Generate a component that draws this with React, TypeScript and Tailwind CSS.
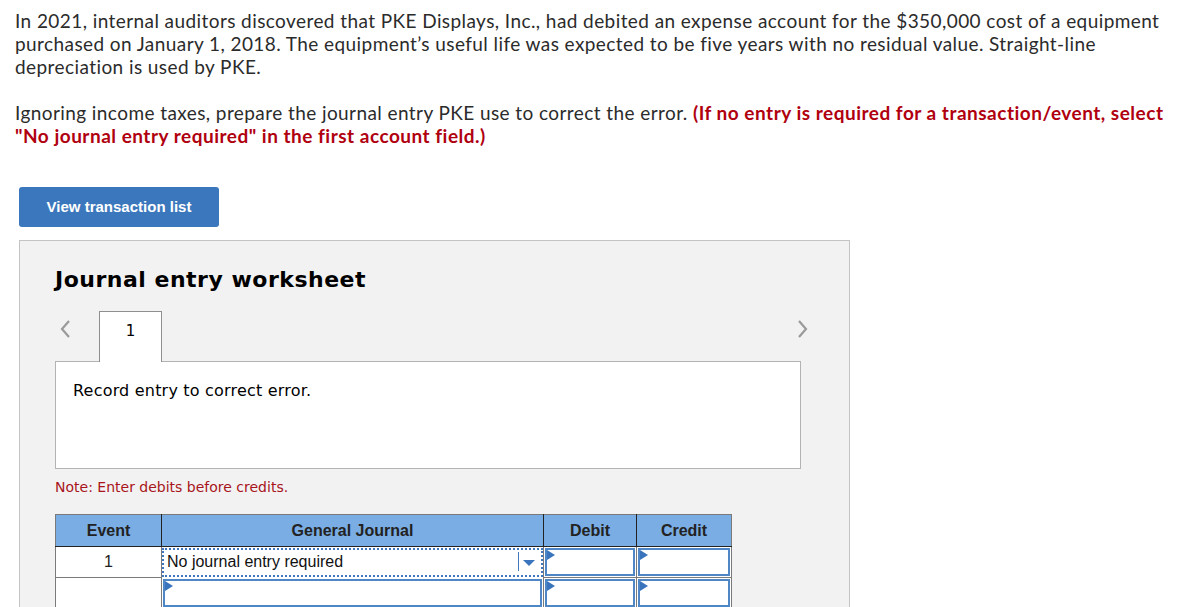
import React from 'react';

const Marker = () => (
  <span className="absolute left-0 top-0 w-0 h-0 border-y-[5px] border-y-transparent border-l-[8px] border-l-[#3a74bd]" />
);

const InputCell: React.FC = () => (
  <div className="relative h-[28px] border-2 border-[#4f86c6] bg-white">
    <Marker />
  </div>
);

const Chevron: React.FC<{ dir: 'left' | 'right' }> = ({ dir }) => (
  <svg width="12" height="18" viewBox="0 0 12 18" className="block">
    <path
      d={dir === 'left' ? 'M10 1 L3 9 L10 17' : 'M2 1 L9 9 L2 17'}
      fill="none"
      stroke="#9a9a9a"
      strokeWidth="2.2"
    />
  </svg>
);

export default function App() {
  return (
    <div className="bg-white w-[1195px] h-[607px] overflow-hidden text-[#2b2b2b]">
      <div className="px-[15px] pt-[9px] font-['Lato',sans-serif] text-[19px] leading-[23px] tracking-[0.42px]">
        <p className="whitespace-nowrap">
          In 2021, internal auditors discovered that PKE Displays, Inc., had debited an expense account for the $350,000 cost of a equipment
          <br />
          purchased on January 1, 2018. The equipment’s useful life was expected to be five years with no residual value. Straight-line
          <br />
          depreciation is used by PKE.
        </p>
        <p className="mt-[23px] whitespace-nowrap">
          Ignoring income taxes, prepare the journal entry PKE use to correct the error.{' '}
          <span className="font-bold text-[#b0000f] tracking-[0.5px]">
            (If no entry is required for a transaction/event, select
            <br />
            "No journal entry required" in the first account field.)
          </span>
        </p>
      </div>

      <div className="ml-[19px] mt-[40px]">
        <button className="w-[200px] h-[40px] rounded-[3px] bg-[#3b77bc] text-white font-bold text-[15px] font-['Liberation_Sans',Arial,sans-serif]">
          View transaction list
        </button>
      </div>

      <div className="ml-[19px] mt-[13px] w-[831px] h-[400px] bg-[#f2f2f2] border border-[#c4c4c4] pl-[35px] pt-[25px]">
        <h2 className="font-['DejaVu_Sans',Verdana,sans-serif] font-bold text-[22px] leading-[28px] text-black tracking-[0.5px]">
          Journal entry worksheet
        </h2>

        <div className="relative w-[746px] mt-[17px]">
          <div className="absolute left-[4px] top-[9px]">
            <Chevron dir="left" />
          </div>
          <div className="absolute right-[-8px] top-[9px]">
            <Chevron dir="right" />
          </div>
          <div className="ml-[44px] w-[63px] h-[51px] bg-white border border-b-0 border-[#8f8f8f] relative z-10 mb-[-1px] flex justify-center pt-[8px] font-['DejaVu_Sans',sans-serif] text-[15px] text-black">
            1
          </div>
          <div className="h-[108px] bg-white border border-[#b3b3b3] pl-[17px] pt-[17px] font-['DejaVu_Sans',Verdana,sans-serif] text-[16px] tracking-[0.2px] text-black">
            Record entry to correct error.
          </div>
        </div>

        <p className="mt-[8px] font-['DejaVu_Sans',Verdana,sans-serif] text-[14px] text-[#a8151b]">
          Note: Enter debits before credits.
        </p>

        <table className="mt-[16px] border-collapse border border-[#7a7a7a] font-['Liberation_Sans',Arial,sans-serif] text-[16px]">
          <thead>
            <tr className="bg-[#7aade3] h-[32px] text-[#222] font-bold">
              <th className="w-[106px] border-r border-b border-[#222] font-bold">Event</th>
              <th className="w-[382px] border-r border-b border-[#222] font-bold">General Journal</th>
              <th className="w-[93px] border-r border-b border-[#222] font-bold">Debit</th>
              <th className="w-[95px] border-b border-[#222] font-bold">Credit</th>
            </tr>
          </thead>
          <tbody>
            <tr className="h-[29px] bg-white">
              <td className="border-r border-b border-[#7a7a7a] text-center text-[#222] align-middle">1</td>
              <td className="border-r border-[#7a7a7a] p-0">
                <div className="relative h-[29px] border-2 border-dotted border-[#3f78bf] flex items-center pl-[3px] text-[#111]">
                  No journal entry required
                  <span className="absolute right-[22px] top-[2px] bottom-[4px] w-px bg-[#3f78bf]" />
                  <span className="absolute right-[6px] top-[10px] w-0 h-0 border-x-[6px] border-x-transparent border-t-[6px] border-t-[#3a74bd]" />
                </div>
              </td>
              <td className="border-r border-b border-[#7a7a7a] p-[1px]">
                <InputCell />
              </td>
              <td className="border-b border-[#7a7a7a] p-[1px]">
                <InputCell />
              </td>
            </tr>
            <tr className="h-[29px] bg-white">
              <td className="border-r border-b border-[#7a7a7a]"></td>
              <td className="border-r border-b border-[#7a7a7a] p-[1px]">
                <InputCell />
              </td>
              <td className="border-r border-b border-[#7a7a7a] p-[1px]">
                <InputCell />
              </td>
              <td className="border-b border-[#7a7a7a] p-[1px]">
                <InputCell />
              </td>
            </tr>
            <tr className="h-[29px] bg-white">
              <td className="border-r border-b border-[#7a7a7a]"></td>
              <td className="border-r border-b border-[#7a7a7a] p-[1px]">
                <InputCell />
              </td>
              <td className="border-r border-b border-[#7a7a7a] p-[1px]">
                <InputCell />
              </td>
              <td className="border-b border-[#7a7a7a] p-[1px]">
                <InputCell />
              </td>
            </tr>
          </tbody>
        </table>
      </div>
    </div>
  );
}
